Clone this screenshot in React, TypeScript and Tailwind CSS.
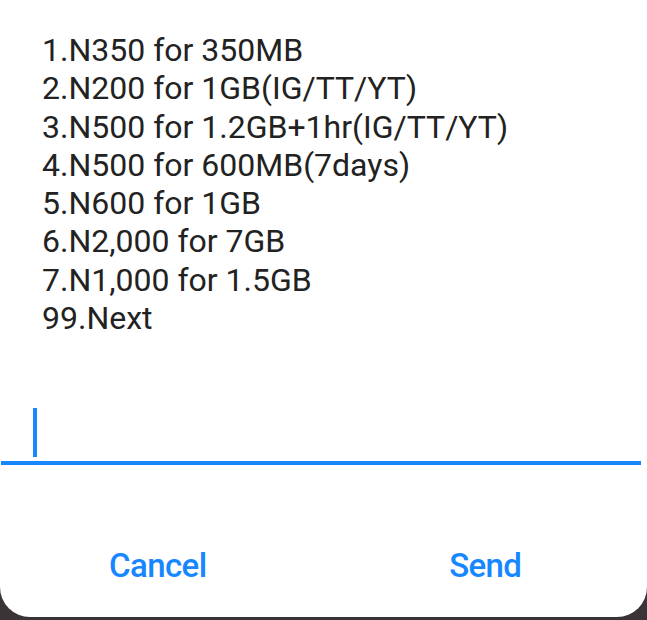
import React from 'react';

const OPTIONS = [
  '1.N350 for 350MB',
  '2.N200 for 1GB(IG/TT/YT)',
  '3.N500 for 1.2GB+1hr(IG/TT/YT)',
  '4.N500 for 600MB(7days)',
  '5.N600 for 1GB',
  '6.N2,000 for 7GB',
  '7.N1,000 for 1.5GB',
  '99.Next',
];

const App: React.FC = () => {
  return (
    <div className="w-[647px] h-[620px] bg-[#3b3437] font-['Roboto',sans-serif] overflow-hidden">
      <div className="h-[617px] bg-white rounded-b-[30px] flex flex-col">
        {/* USSD menu */}
        <div className="pt-[31px] pl-[42px] text-[32px] leading-[38.3px] text-[#222222]">
          {OPTIONS.map((o) => (
            <div key={o}>{o}</div>
          ))}
        </div>

        {/* Input */}
        <div className="mt-[71px] ml-[1px] mr-[6px] border-b-4 border-[#1787ff] h-[57px] pl-[32px]">
          <div className="w-[4px] h-[49px] bg-[#1787ff]" />
        </div>

        {/* Actions */}
        <div className="grid grid-cols-2 mt-[82px] text-[33px] leading-[38px] tracking-[-0.6px] font-medium text-[#1787ff]">
          <div className="text-center pr-[8px]">Cancel</div>
          <div className="text-center">Send</div>
        </div>
      </div>
    </div>
  );
};

export default App;
